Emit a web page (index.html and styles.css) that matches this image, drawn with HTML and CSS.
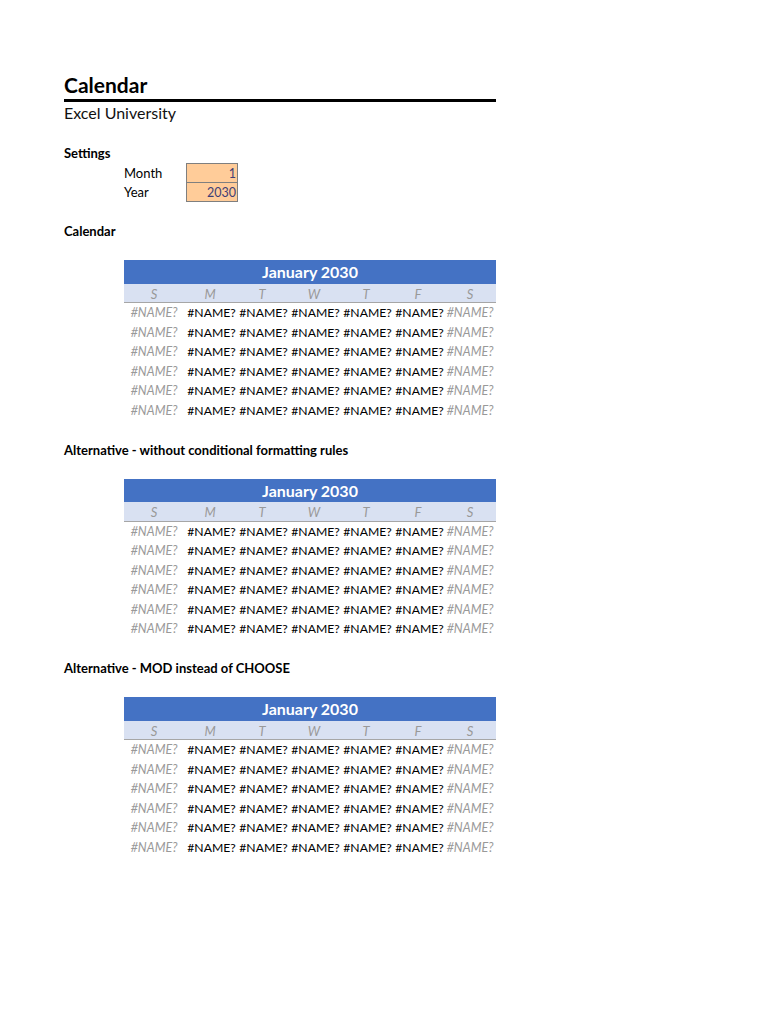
FILE: index.html
```html
<!DOCTYPE html>
<html>
<head>
<meta charset="utf-8">
<link rel="stylesheet" href="styles.css">
</head>
<body>
<div class="sheet">
  <div class="title">Calendar</div>
  <div class="subtitle">Excel University</div>
  <div class="row"></div>
  <div class="row label">Settings</div>
  <div class="settings">
    <div class="s-label">Month</div><div class="input top">1</div>
    <div class="s-label">Year</div><div class="input">2030</div>
  </div>
  <div class="row"></div>

  <section class="section">
    <div class="row label">Calendar</div>
    <div class="row"></div>
    <div class="cal" id="cal1"></div>
    <div class="row"></div>
  </section>

  <section class="section">
    <div class="row label">Alternative - without conditional formatting rules</div>
    <div class="row"></div>
    <div class="cal" id="cal2"></div>
    <div class="row"></div>
  </section>

  <section class="section">
    <div class="row label">Alternative - MOD instead of CHOOSE</div>
    <div class="row"></div>
    <div class="cal" id="cal3"></div>
    <div class="row"></div>
  </section>
</div>
<script src="script.js"></script>
</body>
</html>
```

FILE: styles.css
```css
html, body {
  margin: 0;
  padding: 0;
  background: #fff;
}
body {
  font-family: Lato, "Open Sans", "Liberation Sans", sans-serif;
  color: #000;
}
.sheet {
  padding: 70px 0 0 64px;
  width: 432px;
}
.title {
  font-weight: 700;
  font-size: 21px;
  height: 29px;
  line-height: 29px;
  border-bottom: 3px solid #000;
}
.subtitle {
  font-size: 16px;
  height: 21.5px;
  line-height: 21.5px;
  color: #111;
}
.row {
  height: 19.5px;
  line-height: 20.5px;
  font-size: 12.5px;
  white-space: nowrap;
}
.label {
  font-weight: 700;
  font-size: 13px;
}
.settings {
  display: grid;
  grid-template-columns: 62px 52px;
  grid-auto-rows: 19.5px;
  margin-left: 60px;
  font-size: 13px;
  line-height: 20px;
}
.input {
  background: #FFCC99;
  color: #3F3F76;
  border: 1px solid #7F7F7F;
  text-align: right;
  padding-right: 1px;
  line-height: 19px;
  font-size: 12.5px;
  box-sizing: border-box;
}
.input.top {
  border-bottom: none;
}
.cal {
  margin-left: 60px;
  width: 372px;
  display: grid;
  grid-template-columns: 60px repeat(6, 52px);
  grid-template-rows: 23.5px 19.5px repeat(6, 19.5px);
}
.cal-head {
  grid-column: 1 / -1;
  background: #4472C4;
  color: #fff;
  font-weight: 700;
  font-size: 16px;
  line-height: 24px;
  text-align: center;
}
.dow {
  background: #D9E1F2;
  color: #999999;
  font-style: italic;
  font-weight: 400;
  font-size: 13px;
  line-height: 20px;
  text-align: center;
  border-bottom: 1px solid #A6A6A6;
  box-sizing: border-box;
}
.cell {
  font-size: 12.2px;
  line-height: 20.5px;
  text-align: center;
  white-space: nowrap;
  color: #000;
  padding-left: 3px;
}
.cell.we {
  color: #999999;
  font-style: italic;
  font-weight: 400;
  font-size: 12.5px;
  padding-left: 0;
}
```

FILE: script.js
```js
(function () {
  var days = ["S", "M", "T", "W", "T", "F", "S"];
  ["cal1", "cal2", "cal3"].forEach(function (id) {
    var el = document.getElementById(id);
    var h = document.createElement("div");
    h.className = "cal-head";
    h.textContent = "January 2030";
    el.appendChild(h);
    days.forEach(function (d) {
      var c = document.createElement("div");
      c.className = "dow";
      c.textContent = d;
      el.appendChild(c);
    });
    for (var r = 0; r < 6; r++) {
      for (var i = 0; i < 7; i++) {
        var c = document.createElement("div");
        c.className = "cell" + (i === 0 || i === 6 ? " we" : "");
        c.textContent = "#NAME?";
        el.appendChild(c);
      }
    }
  });
})();
```
